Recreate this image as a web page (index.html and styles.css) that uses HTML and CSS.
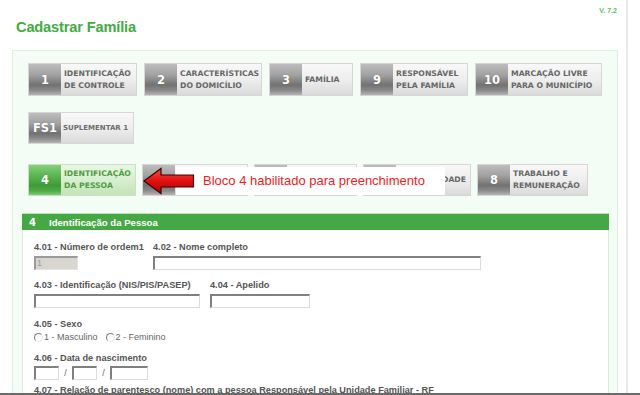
FILE: index.html
```html
<!DOCTYPE html>
<html lang="pt-BR">
<head>
<meta charset="utf-8">
<title>Cadastrar Família</title>
<link rel="stylesheet" href="styles.css">
</head>
<body>
<div class="window">
  <div class="main">
    <header class="top">
      <h1 class="title">Cadastrar Família</h1>
      <span class="version">V. 7.2</span>
    </header>
    <div class="panel">
      <div class="btn-row row1">
        <div class="nb w-b1"><span class="nb-num">1</span><span class="nb-label">IDENTIFICAÇÃO<br>DE CONTROLE</span></div>
        <div class="nb w-b2"><span class="nb-num">2</span><span class="nb-label">CARACTERÍSTICAS<br>DO DOMICÍLIO</span></div>
        <div class="nb w-b3"><span class="nb-num">3</span><span class="nb-label">FAMÍLIA</span></div>
        <div class="nb w-b9"><span class="nb-num">9</span><span class="nb-label">RESPONSÁVEL<br>PELA FAMÍLIA</span></div>
        <div class="nb w-b10"><span class="nb-num">10</span><span class="nb-label">MARCAÇÃO LIVRE<br>PARA O MUNICÍPIO</span></div>
      </div>
      <div class="btn-row row2">
        <div class="nb w-fs"><span class="nb-num">FS1</span><span class="nb-label nb-small">SUPLEMENTAR 1</span></div>
      </div>
      <div class="btn-row row3">
        <div class="nb nb-active w-b4"><span class="nb-num">4</span><span class="nb-label">IDENTIFICAÇÃO<br>DA PESSOA</span></div>
        <div class="nb w-b5"><span class="nb-num"></span><span class="nb-label"></span></div>
        <div class="nb w-b6"><span class="nb-num"></span><span class="nb-label"></span></div>
        <div class="nb w-b7"><span class="nb-num"></span><span class="nb-label nb-right">DADE</span></div>
        <div class="nb w-b8"><span class="nb-num">8</span><span class="nb-label">TRABALHO E<br>REMUNERAÇÃO</span></div>
        <div class="callout">
          <svg class="arrow" width="52" height="28" viewBox="0 0 52 28">
            <defs>
              <linearGradient id="ar" x1="0" y1="0" x2="0" y2="1">
                <stop offset="0" stop-color="#ff4a4a"/>
                <stop offset="0.5" stop-color="#e01010"/>
                <stop offset="1" stop-color="#b00000"/>
              </linearGradient>
            </defs>
            <path d="M1 14 L18 1.5 L18 8 L50.5 8 L50.5 20 L18 20 L18 26.5 Z" fill="url(#ar)" stroke="#3a0000" stroke-width="1.2" stroke-linejoin="miter"/>
          </svg>
          <span class="callout-text">Bloco 4 habilitado para preenchimento</span>
        </div>
      </div>

      <section class="form">
        <div class="sec-head"><span class="sec-num">4</span><span class="sec-title">Identificação da Pessoa</span></div>
        <div class="form-body">
          <div class="frow">
            <div class="field f-401">
              <label class="lbl">4.01 - Número de ordem1</label>
              <div class="inp inp-dis w-44">1</div>
            </div>
            <div class="field">
              <label class="lbl">4.02 - Nome completo</label>
              <div class="inp w-328"></div>
            </div>
          </div>
          <div class="frow mt-10">
            <div class="field f-403">
              <label class="lbl">4.03 - Identificação (NIS/PIS/PASEP)</label>
              <div class="inp w-166"></div>
            </div>
            <div class="field">
              <label class="lbl">4.04 - Apelido</label>
              <div class="inp w-100"></div>
            </div>
          </div>
          <div class="field mt-11">
            <label class="lbl">4.05 - Sexo</label>
            <div class="radios">
              <span class="radio"><span class="rdot"></span>1 - Masculino</span>
              <span class="radio"><span class="rdot"></span>2 - Feminino</span>
            </div>
          </div>
          <div class="field mt-10">
            <label class="lbl">4.06 - Data de nascimento</label>
            <div class="date">
              <div class="inp w-25"></div><span class="slash">/</span>
              <div class="inp w-25"></div><span class="slash">/</span>
              <div class="inp w-38"></div>
            </div>
          </div>
          <div class="field mt-6">
            <label class="lbl">4.07 - Relação de parentesco (nome) com a pessoa Responsável pela Unidade Familiar - RF</label>
          </div>
        </div>
      </section>
    </div>
  </div>
</div>
</body>
</html>
```

FILE: styles.css
```css
* { box-sizing: border-box; }
html, body { margin: 0; padding: 0; background: #fff; }
body { font-family: "Liberation Sans", Arial, sans-serif; }

.window {
  width: 640px;
  height: 395px;
  overflow: hidden;
  border-bottom: 2px solid #6a6a6a;
}

.main {
  width: 628px;
  height: 393px;
  overflow: hidden;
  border-right: 2px solid #e8e8e8;
}

.top {
  height: 50px;
  display: flex;
  align-items: flex-start;
  justify-content: space-between;
  padding: 0 9px 0 16px;
}
.title {
  margin: 18px 0 0 0;
  font: bold 14.6px/18px "Liberation Sans", Arial, sans-serif;
  letter-spacing: -0.15px;
  color: #44aa44;
}
.version {
  margin-top: 6px;
  font: bold 7px/9px "Liberation Sans", Arial, sans-serif;
  color: #66bb66;
}

.panel {
  margin-left: 12px;
  width: 606px;
  height: 400px;
  background: #f3fdf5;
  border: 1px solid #dcefe1;
  padding: 12px 0 0 15px;
}

.btn-row { display: flex; gap: 7px; height: 33px; }
.row2 { margin-top: 16px; height: 32px; }
.row3 { margin-top: 20px; height: 32px; gap: 6px; position: relative; }

.nb {
  display: flex;
  height: 100%;
  border: 1px solid #d6d6d6;
  background: #e6e6e6;
}
.nb-num {
  width: 32px;
  flex: none;
  display: flex;
  align-items: center;
  justify-content: center;
  background: linear-gradient(#bdbdbd 0%, #a2a2a2 35%, #727272 68%, #8a8a8a 85%, #b4b4b4 100%);
  color: #fff;
  font: bold 11.5px "DejaVu Sans", Verdana, sans-serif;
  text-shadow: 0 0 1px rgba(0,0,0,0.3);
}
.nb-label {
  flex: 1;
  display: flex;
  align-items: center;
  padding-left: 3px;
  background: linear-gradient(#f8f8f8 0%, #eeeeee 50%, #dadada 100%);
  color: #666;
  font: bold 7.7px/12px "DejaVu Sans", Verdana, sans-serif;
  white-space: nowrap;
}
.nb-right { justify-content: flex-end; padding-right: 4px; }
.nb-small { font-size: 7px; color: #6c6c6c; padding-left: 2px; }

.nb-active { border-color: #c8e2c2; }
.nb-active .nb-num {
  background: linear-gradient(#86cf7c 0%, #5cb552 35%, #3f9c37 68%, #4fa846 85%, #7cc872 100%);
}
.nb-active .nb-label {
  background: linear-gradient(#e9f6e4 0%, #d8eed0 50%, #c4e3b9 100%);
  color: #4e9c40;
}

.w-b1 { width: 109px; }
.w-b2 { width: 118px; }
.w-b3 { width: 84px; }
.w-b9 { width: 108px; }
.w-b10 { width: 127px; }
.w-fs { width: 106px; }
.w-b4 { width: 108px; }
.w-b5 { width: 106px; }
.w-b6 { width: 103px; }
.w-b7 { width: 108px; }
.w-b8 { width: 111px; }

.callout {
  position: absolute;
  left: 115px;
  top: 3px;
  height: 28px;
  display: flex;
  align-items: center;
}
.callout::before {
  content: "";
  position: absolute;
  left: 33px;
  top: 0;
  width: 269px;
  height: 28px;
  background: #fff;
}
.arrow { position: relative; z-index: 1; display: block; }
.callout-text {
  position: relative;
  margin-left: 8px;
  font: 13px/16px "Liberation Sans", Arial, sans-serif;
  color: #ee1c24;
  white-space: nowrap;
}

.form {
  margin: 17px 0 0 -6px;
  width: 587px;
  background: #fff;
  border: 1px solid #dbe9de;
  border-top: none;
}
.sec-head {
  height: 17px;
  display: flex;
  align-items: center;
  background: #45a845;
  border-top: 1px solid #bde0bd;
  margin: 0 -1px;
}
.sec-num {
  width: 22px;
  padding-left: 7px;
  color: #fff;
  font: bold 10px "DejaVu Sans", Verdana, sans-serif;
}
.sec-title {
  padding-left: 5px;
  color: #fff;
  font: bold 9.6px "Liberation Sans", Arial, sans-serif;
}

.form-body {
  padding: 12px 0 20px 11px;
}
.frow { display: flex; }
.field { display: flex; flex-direction: column; }
.f-401 { width: 119px; }
.f-403 { width: 176px; }
.lbl {
  display: block;
  height: 11px;
  font: bold 9.2px/11px "Liberation Sans", Arial, sans-serif;
  color: #555;
  white-space: nowrap;
  margin-bottom: 3px;
}
.inp {
  height: 14px;
  background: #fff;
  border-style: solid;
  border-width: 2px 1px 1px 2px;
  border-color: #808080 #dcdcdc #dcdcdc #808080;
  font: 9px/11px "Liberation Sans", Arial, sans-serif;
  color: #999;
  padding-left: 1px;
}
.inp-dis { background: #d8d6cf; border-color: #9a9a9a #e4e4e4 #e4e4e4 #9a9a9a; }
.w-44 { width: 44px; }
.w-328 { width: 328px; }
.w-166 { width: 166px; }
.w-100 { width: 100px; }
.w-25 { width: 25px; }
.w-38 { width: 38px; }

.mt-10 { margin-top: 10px; }
.mt-11 { margin-top: 11px; }
.mt-6 { margin-top: 5px; }

.radios {
  display: flex;
  height: 12px;
  align-items: center;
  margin-top: -2px;
  gap: 8px;
}
.radio {
  display: flex;
  align-items: center;
  font: 9px/12px "Liberation Sans", Arial, sans-serif;
  color: #666;
}
.rdot {
  width: 9px;
  height: 9px;
  border-radius: 50%;
  border: 1px solid #7a7a7a;
  border-right-color: #e6e6e6;
  border-bottom-color: #e6e6e6;
  background: #fff;
  margin-right: 1px;
}

.date { display: flex; align-items: center; margin-top: -1px; }
.slash {
  width: 13px;
  text-align: center;
  font: 9px "Liberation Sans", Arial, sans-serif;
  color: #666;
}
```
